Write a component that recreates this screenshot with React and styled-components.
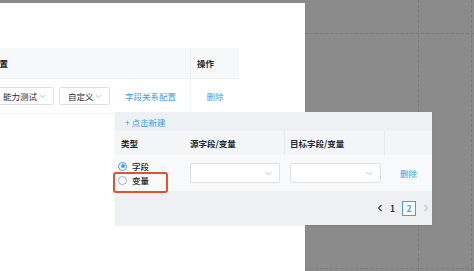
import React from "react";
import styled, { createGlobalStyle } from "styled-components";

const GlobalStyle = createGlobalStyle`
  html, body {
    margin: 0;
    padding: 0;
    background: #8b8b8b;
  }
  body {
    font-family: "Noto Sans CJK SC", "Noto Sans", sans-serif;
    font-size: 8.5px;
    color: #262a30;
  }
`;

const Canvas = styled.div`
  position: relative;
  width: 474px;
  height: 271px;
  overflow: hidden;
  background: #8b8b8b;
  padding-top: 3px;
  box-sizing: border-box;
`;

const Guide = styled.div`
  position: absolute;
  ${({ $vertical, $at }) =>
    $vertical
      ? `left: ${$at}px; top: 0; bottom: 0; border-left: 1px dashed #7b7b7b;`
      : `top: ${$at}px; left: 305px; right: 0; border-top: 1px dashed #7b7b7b;`}
`;

const Panel = styled.div`
  width: 305px;
  height: 268px;
  background: #fff;
  padding-top: 45px;
  box-sizing: border-box;
  overflow: hidden;
`;

const Table = styled.div`
  margin-left: -19px;
  width: 258px;
`;

const Row = styled.div`
  display: grid;
  grid-template-columns: 135px 75px 48px;
  height: ${({ $h }) => $h}px;
  background: ${({ $head }) => ($head ? "#f7f8fa" : "#fff")};
  border-bottom: 1px solid #eef0f3;
`;

const Cell = styled.div`
  display: flex;
  align-items: center;
  gap: 5px;
  padding-left: ${({ $pl }) => $pl}px;
  justify-content: ${({ $center }) => ($center ? "center" : "flex-start")};
  font-weight: ${({ $bold }) => ($bold ? 700 : 400)};
  border-right: ${({ $line }) => ($line ? "1px solid #eef0f3" : "none")};
`;

const Select = styled.div`
  display: flex;
  align-items: center;
  justify-content: space-between;
  width: ${({ $w }) => $w}px;
  height: ${({ $h }) => $h || 18}px;
  padding: 0 7px 0 8px;
  box-sizing: border-box;
  border: 1px solid #dcdfe6;
  border-radius: 2px;
  background: #fff;
`;

const Chevron = () => (
  <svg width="7" height="5" viewBox="0 0 7 5">
    <path d="M0.5 0.8 L3.5 3.8 L6.5 0.8" fill="none" stroke="#b4b8bf" strokeWidth="0.9" />
  </svg>
);

const Link = styled.span`
  color: #3a9ee6;
  cursor: pointer;
`;

const Popup = styled.div`
  position: absolute;
  left: 115px;
  top: 112px;
  width: 317px;
  height: 113px;
  background: #eef0f3;
  display: flex;
  flex-direction: column;
  box-shadow: 0 1px 2px rgba(0, 0, 0, 0.08);
`;

const Toolbar = styled.div`
  height: 19px;
  display: flex;
  align-items: center;
  padding-left: 10px;
`;

const PopRow = styled.div`
  display: grid;
  grid-template-columns: 69px 101px 100px 47px;
  height: ${({ $h }) => $h}px;
  background: ${({ $head }) => ($head ? "#f3f5f7" : "#f8f9fa")};
`;

const PopCell = styled.div`
  display: flex;
  flex-direction: ${({ $col }) => ($col ? "column" : "row")};
  justify-content: ${({ $center, $col }) => ($center || $col ? "center" : "flex-start")};
  align-items: ${({ $col }) => ($col ? "flex-start" : "center")};
  gap: ${({ $col }) => ($col ? "4px" : "0")};
  padding-left: ${({ $pl }) => $pl || 0}px;
  font-weight: ${({ $bold }) => ($bold ? 700 : 400)};
  border-right: ${({ $line }) => ($line ? "1px solid #e6e9ed" : "none")};
`;

const RadioItem = styled.label`
  display: flex;
  align-items: center;
  gap: 5px;
  height: 10px;
  line-height: 10px;
  font-weight: 500;
`;

const RadioDot = styled.span`
  width: 9px;
  height: 9px;
  border-radius: 50%;
  box-sizing: border-box;
  border: 1px solid ${({ $on }) => ($on ? "#409eff" : "#8fb3d9")};
  background: #fff;
  display: flex;
  align-items: center;
  justify-content: center;
  &::after {
    content: "";
    width: 4px;
    height: 4px;
    border-radius: 50%;
    background: ${({ $on }) => ($on ? "#409eff" : "transparent")};
  }
`;

const Highlight = styled.div`
  position: absolute;
  left: -2px;
  top: 60px;
  width: 55px;
  height: 21px;
  border: 2px solid #e5512c;
  border-radius: 3px;
  box-sizing: border-box;
`;

const Footer = styled.div`
  flex: 1;
  display: flex;
  align-items: center;
  justify-content: flex-end;
  gap: 7px;
  padding-right: 3px;
`;

const PageNum = styled.span`
  display: flex;
  align-items: center;
  justify-content: center;
  height: 15px;
  box-sizing: border-box;
  font-weight: 700;
  color: ${({ $active }) => ($active ? "#409eff" : "#303133")};
  border: ${({ $active }) => ($active ? "1px solid #409eff" : "none")};
  background: ${({ $active }) => ($active ? "#fff" : "transparent")};
  width: ${({ $active }) => ($active ? "14px" : "auto")};
`;

const Arrow = ({ dir, color }) => (
  <svg width="6" height="8" viewBox="0 0 6 8">
    <path
      d={dir === "left" ? "M4.5 0.8 L1.5 4 L4.5 7.2" : "M1.5 0.8 L4.5 4 L1.5 7.2"}
      fill="none"
      stroke={color}
      strokeWidth="1.1"
    />
  </svg>
);

export default function App() {
  return (
    <>
      <GlobalStyle />
      <Canvas>
        <Guide $vertical $at={418} />
        <Guide $vertical $at={471} />
        <Guide $at={33} />
        <Guide $at={268} />
        <Panel>
          <Table>
            <Row $head $h={30}>
              <Cell $pl={10} $bold>位置</Cell>
              <Cell $line />
              <Cell $pl={6} $bold>操作</Cell>
            </Row>
            <Row $h={34}>
              <Cell $pl={13}>
                <Select $w={60}>能力测试<Chevron /></Select>
                <Select $w={51}>自定义<Chevron /></Select>
              </Cell>
              <Cell $pl={9} $line><Link>字段关系配置</Link></Cell>
              <Cell $center><Link>删除</Link></Cell>
            </Row>
          </Table>
        </Panel>
        <Popup>
          <Toolbar><Link>+ 点击新建</Link></Toolbar>
          <PopRow $head $h={24}>
            <PopCell $pl={6} $bold>类型</PopCell>
            <PopCell $pl={6} $bold $line>源字段/变量</PopCell>
            <PopCell $pl={5} $bold $line>目标字段/变量</PopCell>
            <PopCell />
          </PopRow>
          <PopRow $h={36}>
            <PopCell $col $pl={3}>
              <RadioItem><RadioDot $on />字段</RadioItem>
              <RadioItem><RadioDot />变量</RadioItem>
            </PopCell>
            <PopCell $pl={6}><Select $w={90} $h={20}><span /><Chevron /></Select></PopCell>
            <PopCell $pl={5}><Select $w={91} $h={20}><span /><Chevron /></Select></PopCell>
            <PopCell $center><Link>删除</Link></PopCell>
          </PopRow>
          <Footer>
            <Arrow dir="left" color="#303133" />
            <PageNum>1</PageNum>
            <PageNum $active>2</PageNum>
            <Arrow dir="right" color="#c0c4cc" />
          </Footer>
          <Highlight />
        </Popup>
      </Canvas>
    </>
  );
}
